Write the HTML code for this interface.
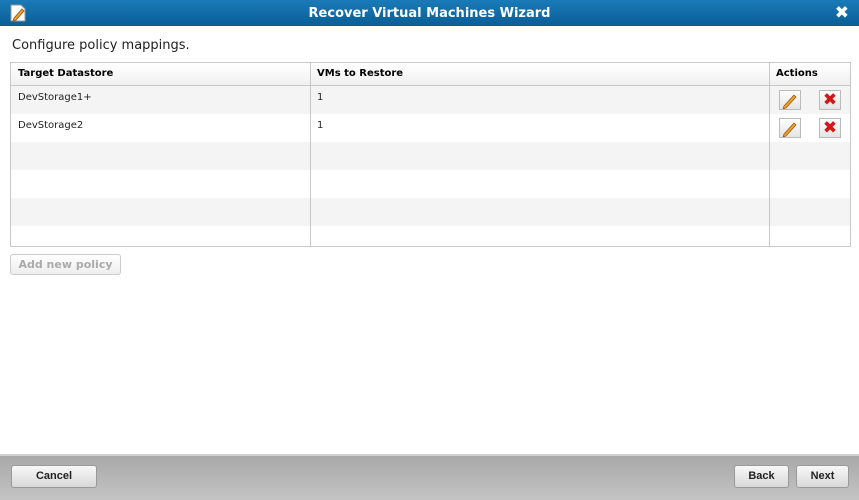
<!DOCTYPE html>
<html><head><style>
body{margin:0;width:859px;height:500px;overflow:hidden;background:#fff;font-family:"Liberation Sans","DejaVu Sans",sans-serif;position:relative}
.title{position:absolute;left:0;top:0;width:859px;height:26px;background:linear-gradient(#1a7ab8,#0a5e96);color:#fff;font-weight:bold;font-size:13px;text-align:center;line-height:27px;font-family:"DejaVu Sans",sans-serif}
.x{position:absolute;right:10px;top:3px;font-size:17px;line-height:20px}
.lbl{position:absolute;left:12px;top:38px;font-size:13px;color:#222;font-family:"DejaVu Sans",sans-serif}
.tbl{position:absolute;left:10px;top:62px;width:839px;height:183px;border:1px solid #c8c8c8;overflow:hidden}
.hdr{height:22px;border-bottom:1px solid #c8c8c8;background:linear-gradient(#fff,#f0f0f0);font-size:10px;font-weight:bold;font-family:"DejaVu Sans",sans-serif;position:relative}
.row{height:28px;position:relative;font-size:10px;font-family:"DejaVu Sans",sans-serif;color:#222}
.g{background:#f4f4f4}
.c1{position:absolute;left:7px;top:6px}.c2{position:absolute;left:306px;top:6px}.c3{position:absolute;left:765px;top:6px}
.vl{position:absolute;top:0;bottom:0;width:1px;background:#c8c8c8;z-index:5}
.ib{position:absolute;top:4px;width:22px;height:20px;border:1px solid #bbb;background:linear-gradient(#fff,#e4e4e4);box-sizing:border-box}
.btn{position:absolute;border:1px solid #999;border-radius:3px;background:linear-gradient(#f8f8f8,#d8d8d8);font-size:11px;font-weight:bold;text-align:center;box-sizing:border-box;font-family:"DejaVu Sans",sans-serif}
.foot{position:absolute;left:0;top:454px;width:859px;height:46px;background:linear-gradient(#a8a8a8,#c4c4c4);border-top:2px solid #d0d0d0;box-sizing:border-box}
.rx{left:808px;color:#d01818;font-size:17px;text-align:center;line-height:18px}
</style></head><body>
<div class="title"><svg style="position:absolute;left:10px;top:4px" width="16" height="18" viewBox="0 0 16 18"><path d="M1 1h10l4 4v12H1z" fill="#fff" stroke="#999"/><path d="M4 14l8-9 2 2-8 9-3 1z" fill="#e8a030" stroke="#a05010" stroke-width=".8"/></svg>Recover Virtual Machines Wizard<span class="x">✖</span></div>
<div class="lbl">Configure policy mappings.</div>
<div class="tbl">
<div class="hdr"><span class="c1" style="top:5px">Target Datastore</span><span class="c2" style="top:5px">VMs to Restore</span><span class="c3" style="top:5px">Actions</span></div>
<div class="row g"><span class="c1">DevStorage1+</span><span class="c2">1</span>
<div class="ib" style="left:768px"><svg width="20" height="18"><path d="M4 15l10-11 2 2-10 11-3 1z" fill="#f0a020" stroke="#905010" stroke-width=".7"/></svg></div>
<div class="ib rx">✖</div></div>
<div class="row"><span class="c1">DevStorage2</span><span class="c2">1</span>
<div class="ib" style="left:768px"><svg width="20" height="18"><path d="M4 15l10-11 2 2-10 11-3 1z" fill="#f0a020" stroke="#905010" stroke-width=".7"/></svg></div>
<div class="ib rx">✖</div></div>
<div class="row g"></div><div class="row"></div><div class="row g"></div><div class="row"></div>
<div class="vl" style="left:299px"></div><div class="vl" style="left:758px"></div>
</div>
<div class="btn" style="left:10px;top:254px;width:111px;height:21px;line-height:19px;color:#aaa;border-color:#ccc;background:linear-gradient(#fff,#eee)">Add new policy</div>
<div class="foot"></div>
<div class="btn" style="left:11px;top:465px;width:86px;height:23px;line-height:21px;color:#222;font-family:'Liberation Sans',sans-serif">Cancel</div>
<div class="btn" style="left:734px;top:465px;width:55px;height:23px;line-height:21px;color:#222;font-family:'Liberation Sans',sans-serif">Back</div>
<div class="btn" style="left:796px;top:465px;width:53px;height:23px;line-height:21px;color:#222;font-family:'Liberation Sans',sans-serif">Next</div>
</body></html>
